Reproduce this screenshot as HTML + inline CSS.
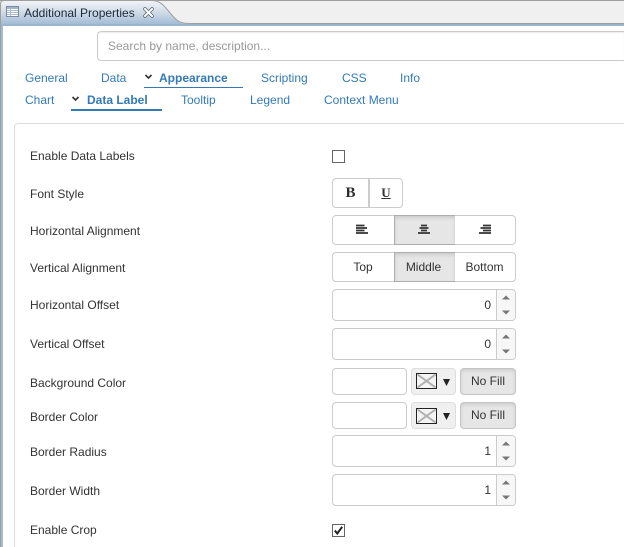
<!DOCTYPE html>
<html>
<head>
<meta charset="utf-8">
<style>
html,body{margin:0;padding:0;background:#fff;overflow:hidden}
#p{position:relative;width:624px;height:547px;overflow:hidden;background:#fff;font-family:"Liberation Sans",Arial,sans-serif;font-size:12px;color:#333}
#p>*{position:absolute;box-sizing:border-box}
.t{white-space:nowrap;line-height:14px;height:14px}
.n{color:#337ab7}
.b{font-weight:bold}
.box{border:1px solid #ccc;border-radius:4px;background:#fff}
.seg{border:1px solid #ccc;background:#fff;text-align:center;line-height:28px;color:#333}
.act{background:#e6e6e6;border:1px solid #adadad;box-shadow:inset 0 2px 3px rgba(0,0,0,.12)}
.spb{background:#f7f7f7;border-left:1px solid #ccc}
.nofill{background:#e6e6e6;border:1px solid #c4c4c4;border-radius:4px;text-align:center;line-height:24px;box-shadow:inset 0 2px 3px rgba(0,0,0,.1)}
.sw{background:#f0f0f0;border:1px solid #ddd;border-radius:4px}
.val{text-align:right;width:40px}
</style>
</head>
<body>
<div id="p">
<svg style="left:0;top:0" width="624" height="32" viewBox="0 0 624 32">
<defs><linearGradient id="g" x1="0" y1="0" x2="0" y2="1"><stop offset="0" stop-color="#f2f5f8"/><stop offset=".4" stop-color="#d5dfea"/><stop offset="1" stop-color="#9db7d3"/></linearGradient></defs>
<rect x="0" y="0" width="624" height="24" fill="#f0f0f0"/>
<rect x="0" y="0" width="624" height="1" fill="#a0a0a0"/>
<rect x="0" y="23" width="624" height="1" fill="#a0a0a0"/>
<path d="M0 26V4Q0 .5 4 .5H152C161 .5 165 7 171 14C176 20 179 23.500 190 23.500V26Z" fill="url(#g)"/>
<path d="M.5 32V4Q.5 .5 4 .5H152C161 .5 165 7 171 14C176 20 179 23.500 190 23.500" fill="none" stroke="#a0a0a0"/>
<rect x="1" y="24" width="623" height="2" fill="#9ab5d2"/>
</svg>
<div style="left:0;top:26px;width:3px;height:521px;background:#a3bad4;border-left:1px solid #9a9fa6"></div>
<svg style="left:6px;top:6px" width="14" height="12" viewBox="0 0 14 12">
<rect x=".5" y=".5" width="12" height="10" fill="#fff" stroke="#7a8ba0"/>
<rect x="1" y="1" width="11" height="2" fill="#a3b5ca"/>
<path d="M1 4.500H12M1 6.500H12M1 8.500H12M4.500 3V10" stroke="#aebccc" stroke-width="1"/>
</svg>
<div class="t" style="left:24px;top:6px;color:#1c2a3a">Additional Properties</div>
<svg style="left:143px;top:7px" width="11" height="11" viewBox="0 0 11 11">
<path d="M2 2L9 9M9 2L2 9" stroke="#5f6a75" stroke-width="3.600" stroke-linecap="square"/>
<path d="M2 2L9 9M9 2L2 9" stroke="#fff" stroke-width="2" stroke-linecap="square"/>
</svg>

<div class="box" style="left:97px;top:31px;width:527px;height:30px;border-right:0;border-radius:4px 0 0 4px;box-shadow:inset 0 1px 1px rgba(0,0,0,.08)"></div>
<div class="t" style="left:108px;top:39px;color:#999">Search by name, description...</div>

<div class="t n" style="left:25px;top:71px">General</div>
<div class="t n" style="left:101px;top:71px">Data</div>
<svg style="left:144px;top:73px" width="10" height="8" viewBox="0 0 10 8"><path d="M1.500 2L4.500 5L7.500 2" fill="none" stroke="#333" stroke-width="1.600"/></svg>
<div class="t n b" style="left:159px;top:71px">Appearance</div>
<div style="left:144px;top:87px;width:99px;height:1px;background:#337ab7"></div>
<div class="t n" style="left:261px;top:71px">Scripting</div>
<div class="t n" style="left:342px;top:71px">CSS</div>
<div class="t n" style="left:400px;top:71px">Info</div>

<div class="t n" style="left:25px;top:93px">Chart</div>
<svg style="left:71px;top:95px" width="10" height="8" viewBox="0 0 10 8"><path d="M1.500 2L4.500 5L7.500 2" fill="none" stroke="#333" stroke-width="1.600"/></svg>
<div class="t n b" style="left:87px;top:93px">Data Label</div>
<div style="left:71px;top:109px;width:91px;height:2px;background:#337ab7"></div>
<div class="t n" style="left:181px;top:93px">Tooltip</div>
<div class="t n" style="left:250px;top:93px">Legend</div>
<div class="t n" style="left:324px;top:93px">Context Menu</div>

<div style="left:14px;top:123px;width:610px;height:424px;border:1px solid #ddd;border-right:0;border-bottom:0;border-radius:4px 0 0 0"></div>

<div class="t" style="left:30px;top:149px">Enable Data Labels</div>
<div class="t" style="left:30px;top:187px">Font Style</div>
<div class="t" style="left:30px;top:224px">Horizontal Alignment</div>
<div class="t" style="left:30px;top:261px">Vertical Alignment</div>
<div class="t" style="left:30px;top:298px">Horizontal Offset</div>
<div class="t" style="left:30px;top:337px">Vertical Offset</div>
<div class="t" style="left:30px;top:376px">Background Color</div>
<div class="t" style="left:30px;top:410px">Border Color</div>
<div class="t" style="left:30px;top:445px">Border Radius</div>
<div class="t" style="left:30px;top:484px">Border Width</div>
<div class="t" style="left:30px;top:523px">Enable Crop</div>

<div style="left:332px;top:150px;width:13px;height:13px;border:1px solid #666;background:#fff"></div>

<div class="seg" style="left:332px;top:178px;width:37px;height:30px;border-radius:4px 0 0 4px;border-right:0;font:bold 15px/29px 'Liberation Serif',serif;padding-right:1px;color:#2a2a2a">B</div>
<div class="seg" style="left:368px;top:178px;width:35px;height:30px;border-radius:0 4px 4px 0;border-left:2px solid #ccc;font:bold 13px/27px 'Liberation Serif',serif;text-decoration:underline">U</div>

<div class="seg" style="left:332px;top:215px;width:63px;height:30px;border-radius:4px 0 0 4px"></div>
<div class="seg act" style="left:394px;top:215px;width:62px;height:30px"></div>
<div class="seg" style="left:455px;top:215px;width:61px;height:30px;border-radius:0 4px 4px 0;border-left:0"></div>
<svg style="left:355px;top:224px" width="14" height="11" viewBox="0 0 14 11"><path d="M1 1.500H9.500M1 4H12M1 6.500H9.500M1 9H13" stroke="#333" stroke-width="1.700"/></svg>
<svg style="left:417px;top:224px" width="14" height="11" viewBox="0 0 14 11"><path d="M4 1.500H10M2.500 4H11.500M4 6.500H10M1 9H13" stroke="#333" stroke-width="1.700"/></svg>
<svg style="left:478px;top:224px" width="14" height="11" viewBox="0 0 14 11"><path d="M5 1.500H13M2.500 4H13M5 6.500H13M1 9H13" stroke="#333" stroke-width="1.700"/></svg>

<div class="seg" style="left:332px;top:252px;width:62px;height:30px;border-radius:4px 0 0 4px;border-right:0;padding-right:1px">Top</div>
<div class="seg act" style="left:394px;top:252px;width:62px;height:30px;padding-right:3px">Middle</div>
<div class="seg" style="left:455px;top:252px;width:61px;height:30px;border-radius:0 4px 4px 0;border-left:0;padding-right:1px">Bottom</div>

<div class="box" style="left:332px;top:289px;width:184px;height:32px;overflow:hidden"><div class="spb" style="position:absolute;left:163px;top:0;width:20px;height:30px"></div></div>
<div class="t val" style="left:451px;top:298px">0</div>
<svg style="left:497px;top:290px" width="18" height="30" viewBox="0 0 18 30"><path d="M5 9.500L9 5.500L13 9.500ZM5 20.500H13L9 24.500Z" fill="#777"/></svg>

<div class="box" style="left:332px;top:328px;width:184px;height:32px;overflow:hidden"><div class="spb" style="position:absolute;left:163px;top:0;width:20px;height:30px"></div></div>
<div class="t val" style="left:451px;top:337px">0</div>
<svg style="left:497px;top:329px" width="18" height="30" viewBox="0 0 18 30"><path d="M5 9.500L9 5.500L13 9.500ZM5 20.500H13L9 24.500Z" fill="#777"/></svg>

<div class="box" style="left:332px;top:368px;width:75px;height:27px"></div>
<div class="sw" style="left:411px;top:368px;width:45px;height:27px"></div>
<svg style="left:416px;top:373px" width="40" height="18" viewBox="0 0 40 18"><rect x=".5" y=".5" width="20" height="15" fill="#f4f4f4" stroke="#222"/><path d="M1.500 1.500L19.500 14.500M19.500 1.500L1.500 14.500" stroke="#b0b0b0" stroke-width="2"/><path d="M27 6H34L30.500 13Z" fill="#222"/></svg>
<div class="nofill" style="left:460px;top:368px;width:56px;height:27px">No Fill</div>

<div class="box" style="left:332px;top:402px;width:75px;height:27px"></div>
<div class="sw" style="left:411px;top:402px;width:45px;height:27px"></div>
<svg style="left:416px;top:408px" width="40" height="18" viewBox="0 0 40 18"><rect x=".5" y=".5" width="20" height="15" fill="#f4f4f4" stroke="#222"/><path d="M1.500 1.500L19.500 14.500M19.500 1.500L1.500 14.500" stroke="#b0b0b0" stroke-width="2"/><path d="M27 5H34L30.500 12Z" fill="#222"/></svg>
<div class="nofill" style="left:460px;top:402px;width:56px;height:27px">No Fill</div>

<div class="box" style="left:332px;top:435px;width:184px;height:32px;overflow:hidden"><div class="spb" style="position:absolute;left:163px;top:0;width:20px;height:30px"></div></div>
<div class="t val" style="left:451px;top:444px">1</div>
<svg style="left:497px;top:436px" width="18" height="30" viewBox="0 0 18 30"><path d="M5 9.500L9 5.500L13 9.500ZM5 20.500H13L9 24.500Z" fill="#777"/></svg>

<div class="box" style="left:332px;top:474px;width:184px;height:32px;overflow:hidden"><div class="spb" style="position:absolute;left:163px;top:0;width:20px;height:30px"></div></div>
<div class="t val" style="left:451px;top:483px">1</div>
<svg style="left:497px;top:475px" width="18" height="30" viewBox="0 0 18 30"><path d="M5 9.500L9 5.500L13 9.500ZM5 20.500H13L9 24.500Z" fill="#777"/></svg>

<div style="left:332px;top:524px;width:13px;height:13px;border:1px solid #666;background:#fff"></div>
<svg style="left:332px;top:524px" width="13" height="13" viewBox="0 0 13 13"><path d="M2.800 6.500L5.300 9.500L10.200 2.800" fill="none" stroke="#222" stroke-width="2"/></svg>
</div>
</body>
</html>
